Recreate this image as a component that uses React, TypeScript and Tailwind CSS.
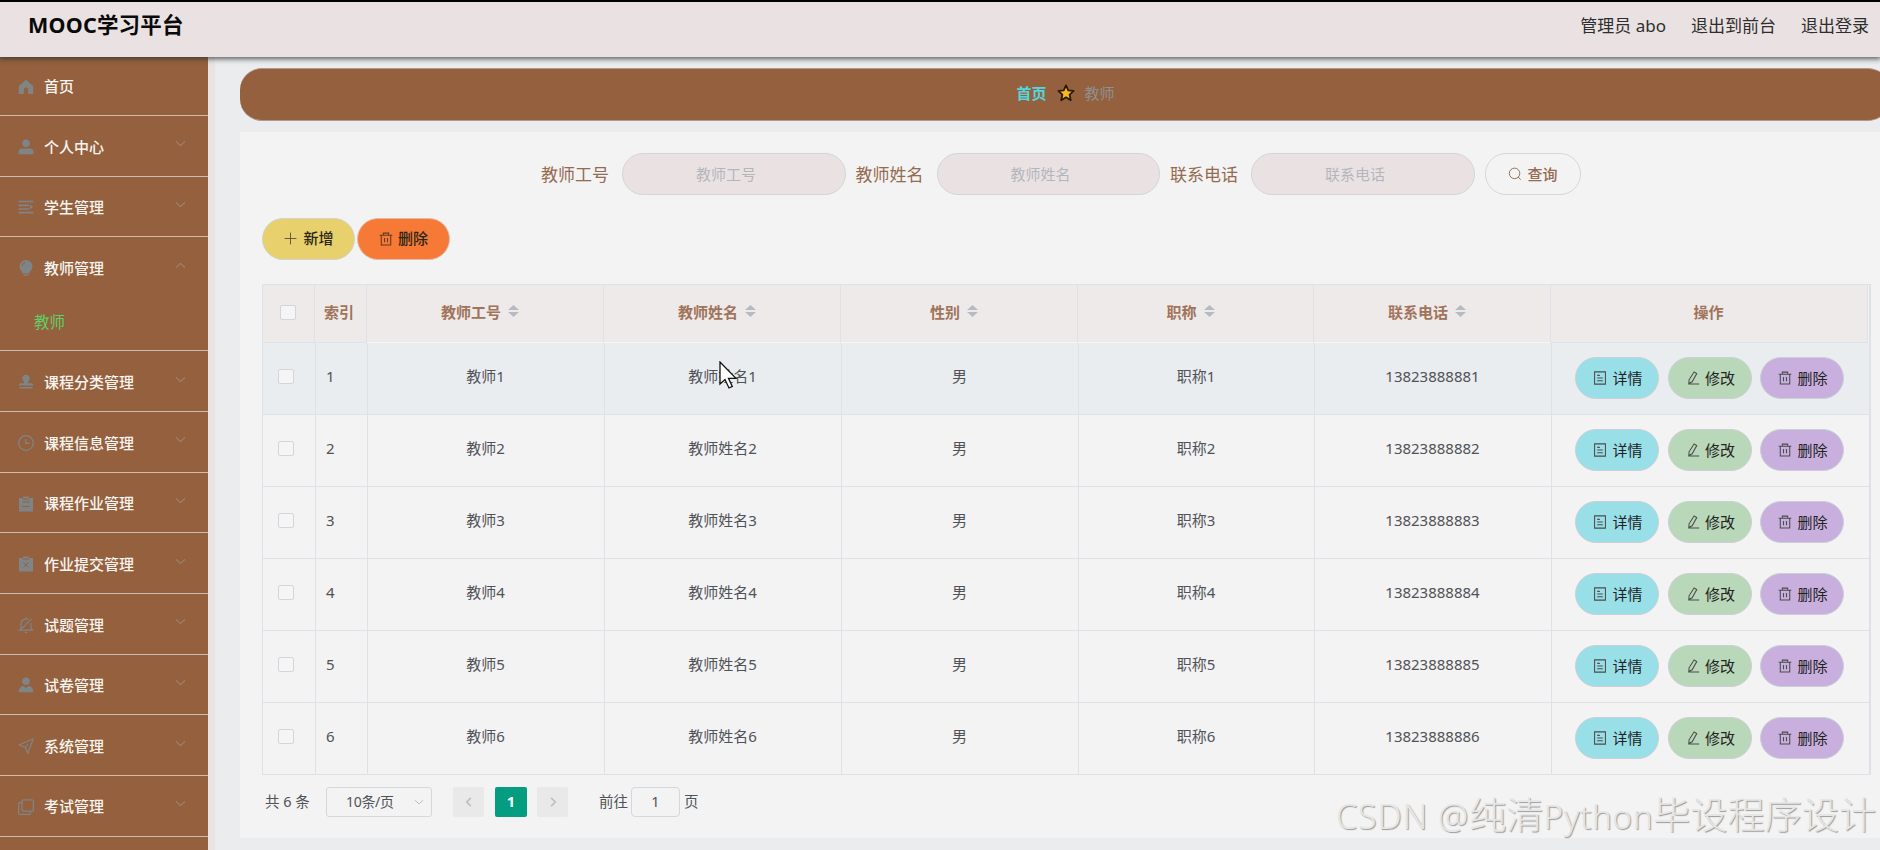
import React from "react";

const ICONS: Record<string, React.ReactNode> = {
  home: <path fill="currentColor" d="M8 .8 1.400 6.600q-.6.5-.6 1.300V15h5v-4.200a2.200 2.200 0 0 1 4.400 0V15h5V7.900q0-.8-.6-1.300z" />,
  user: (
    <g fill="currentColor">
      <circle cx="8" cy="4.300" r="3.800" />
      <path d="M.6 15.200v-1.900Q.6 9.600 4.300 9.600h7.400q3.700 0 3.700 3.700v1.900z" />
    </g>
  ),
  fold: (
    <g fill="none" stroke="currentColor" strokeWidth="1.700">
      <path d="M.5 2.500h15M.5 6.300h10.500M.5 10h10.500M.5 13.700h15" />
      <path fill="currentColor" stroke="none" d="M12 5.500v5l3-2.500z" />
    </g>
  ),
  bulb: (
    <g fill="currentColor">
      <path d="M8 0a6.500 6.500 0 0 0-6.500 6.500c0 3.300 2.500 4.300 3.300 7h6.400c.8-2.700 3.300-3.700 3.300-7A6.500 6.500 0 0 0 8 0z" />
      <path d="M5.500 14.400h5v1.300h-5z" />
      <path d="M4 6.500A4 4 0 0 1 7.500 2.500" fill="none" stroke="#94603e" strokeWidth=".9" />
    </g>
  ),
  stamp: (
    <g fill="currentColor">
      <path d="M8 .8a3.700 3.700 0 0 1 3.700 3.700c0 2-1.700 2.500-1.700 4v.7h3.500q1.900 0 1.900 2.300H.6q0-2.300 1.900-2.300H6v-.7c0-1.500-1.700-2-1.700-4A3.700 3.700 0 0 1 8 .8z" />
      <path d="M1.500 13h13v1.500h-13z" />
    </g>
  ),
  time: (
    <g fill="none" stroke="currentColor" strokeWidth="1.300">
      <circle cx="8" cy="8" r="7.300" />
      <path d="M7.700 3.800V8.300h4" />
    </g>
  ),
  order: (
    <g fill="currentColor">
      <path d="M1 2h4V.6h6V2h4v13.400H1z" />
      <path d="M4.300 6h7.400M4.300 10.500h7.400M4.500 3h7" fill="none" stroke="#94603e" strokeWidth="1" />
    </g>
  ),
  release: (
    <g fill="currentColor">
      <path d="M1 2h4V.6h6V2h4v13.400H1z" />
      <path d="m5.500 6.500 5 5m0-5-5 5M4.500 3h7" fill="none" stroke="#94603e" strokeWidth="1" />
    </g>
  ),
  mute: (
    <g fill="none" stroke="currentColor" strokeWidth="1.200">
      <path d="M.3 13.200h15.400M3 13V7a5 5 0 0 1 7.500-4.400M13 6v7M3 12.500 13.500 1.800M6.800 15.300h2.400M8 .3v1.500" />
    </g>
  ),
  custom: (
    <g fill="currentColor">
      <circle cx="8" cy="4.300" r="3.800" />
      <path d="M.5 15.200q.5-5.400 4.900-6.400L8 11l2.600-2.200q4.400 1 4.900 6.400z" />
    </g>
  ),
  position: (
    <path fill="none" stroke="currentColor" strokeWidth="1.200" strokeLinejoin="round" d="M15.300.8 1 7l6.300 2.300L9.800 15.300zM7.300 9.300l2.500-3" />
  ),
  copy: (
    <g fill="none" stroke="currentColor" strokeWidth="1.300">
      <rect x="4" y=".8" width="11.400" height="11.400" rx="1.500" />
      <path d="M3.500 3.500H2.200Q.6 3.500.6 5.200v8.600q0 1.600 1.600 1.600h8.600q1.700 0 1.700-1.600v-1" />
    </g>
  ),
  plus: <path fill="none" stroke="currentColor" strokeWidth="1" d="M8 1.700v12.600M1.700 8h12.600" />,
  trash: (
    <path fill="none" stroke="currentColor" strokeWidth="1.200" d="M.8 3.700h14.400M5 3.500V1.300h6v2.200M2.600 3.700v11.200h10.800V3.700M6.300 6.800v5M9.700 6.800v5" />
  ),
  doc: <path fill="none" stroke="currentColor" strokeWidth="1.200" d="M1.800 1h12.400v14H1.800zM4.800 5h3M4.800 8h6.400M4.800 11.200h6.400" />,
  edit: <path fill="none" stroke="currentColor" strokeWidth="1.200" d="M9.300 1.200 12.300 3 7 12.300l-3.800 2 .3-4.200zM3 14.800h12" />,
  search: (
    <g fill="none" stroke="currentColor" strokeWidth="1.100">
      <circle cx="7.500" cy="7.300" r="6" />
      <path d="m11.800 11.600 2.700 2.900" />
    </g>
  ),
  down: <path fill="none" stroke="currentColor" strokeWidth="1.300" d="m2.500 5.500 5.500 5 5.500-5" />,
  up: <path fill="none" stroke="currentColor" strokeWidth="1.300" d="m2.500 10.500 5.500-5 5.500 5" />,
  left: <path fill="none" stroke="currentColor" strokeWidth="2.200" d="M10.500 2.500 5 8l5.500 5.500" />,
  right: <path fill="none" stroke="currentColor" strokeWidth="2.200" d="M5.500 2.500 11 8l-5.500 5.500" />,
};

function Icon({ name, className }: { name: string; className: string }) {
  return (
    <svg viewBox="0 0 16 16" className={"shrink-0 " + className}>
      {ICONS[name]}
    </svg>
  );
}

const MENU: { icon: string; label: string; open?: boolean; leaf?: boolean }[] = [
  { icon: "home", label: "首页", leaf: true },
  { icon: "user", label: "个人中心" },
  { icon: "fold", label: "学生管理" },
  { icon: "bulb", label: "教师管理", open: true },
  { icon: "stamp", label: "课程分类管理" },
  { icon: "time", label: "课程信息管理" },
  { icon: "order", label: "课程作业管理" },
  { icon: "release", label: "作业提交管理" },
  { icon: "mute", label: "试题管理" },
  { icon: "custom", label: "试卷管理" },
  { icon: "position", label: "系统管理" },
  { icon: "copy", label: "考试管理" },
];

function Sidebar() {
  return (
    <aside className="w-[208px] shrink-0 bg-[#94603e]">
      {MENU.map((m) => (
        <div key={m.label} className="border-b border-[#d2bcb0]">
          <div className={(m.leaf ? "h-[58px] pt-px " : "h-[59.650px] pt-0.5 ") + "flex items-center pl-[18px] pr-[21px]"}>
            <Icon name={m.icon} className="size-4 text-[#7f8487]" />
            <span className="ml-2.5 text-[15px] font-medium text-[#f8f5f0]">{m.label}</span>
            {!m.leaf && <Icon name={m.open ? "up" : "down"} className="mb-1.5 ml-auto size-[13px] text-[#a18573]" />}
          </div>
          {m.open && <div className="flex h-[53.500px] items-center pb-0.5 pl-[34px] text-[15.500px] text-[#5fd068]">教师</div>}
        </div>
      ))}
    </aside>
  );
}

function Field({ label }: { label: string }) {
  return (
    <div className="flex w-[314.500px] items-center">
      <span className="w-[81px] pt-px text-[17px] text-[#946a50]">{label}</span>
      <div className="flex h-[42px] w-[223.500px] items-center rounded-[21px] border border-[#d3d5db] bg-[#eae2e2]">
        <span className="w-[206px] text-center text-[15px] text-[#b4b6be]">{label}</span>
      </div>
    </div>
  );
}

function Sort() {
  return (
    <svg viewBox="0 0 11 12" className="mb-0.5 ml-[7px] h-3 w-[11px] fill-[#b6bac3]">
      <path d="M0 5 5.500 0 11 5zM0 7h11l-5.500 5z" />
    </svg>
  );
}

function Check() {
  return <span className="block h-[15px] w-4 rounded-[2px] border border-[#d3d5da] bg-[#f5f5f5]" />;
}

function ActionButton({ icon, label, tone }: { icon: string; label: string; tone: string }) {
  return (
    <button className={"flex h-[42px] w-[84px] items-center justify-center gap-[5px] rounded-[21px] border border-[#ccd0d6] pl-0.5 text-[15px] text-[#222] " + tone}>
      <Icon name={icon} className="size-3.5 text-[#4c4c4c]" />
      {label}
    </button>
  );
}

const HEADS = ["教师工号", "教师姓名", "性别", "职称", "联系电话"];

function TeacherTable() {
  return (
    <div className="w-[1609px] border-y border-l border-r-2 border-[#dfe1e9] text-[15px]">
      <div className="grid h-[58px] w-[1605px] grid-cols-[52px_52px_237px_237px_237px_236px_237px_317px] bg-[#eeeae9] font-bold text-[#a0745a]">
        <div className="flex items-center border-b border-r border-[#dfe1e9] pb-[3px] pl-[17px]">
          <Check />
        </div>
        <div className="flex items-center border-b border-r border-[#dfe1e9] pb-[3px] pl-[9px]">索引</div>
        {HEADS.map((h) => (
          <div key={h} className="flex items-center justify-center border-b border-r border-b-[#f6f6f6] border-r-[#dfe1e9] pb-[3px] pr-2.5">
            {h}
            <Sort />
          </div>
        ))}
        <div className="flex items-center justify-center border-b border-r border-[#dfe1e9] pb-[3px] pr-px">操作</div>
      </div>
      {[1, 2, 3, 4, 5, 6].map((n) => (
        <div
          key={n}
          className={
            (n === 1 ? "bg-[#eaedef] " : "bg-[#f3f3f3] ") +
            (n === 6 ? "h-[71px] " : "h-[72px] border-b ") +
            "grid grid-cols-[53px_52px_237px_237px_237px_236px_237px_1fr] divide-x divide-[#dfe1e9] border-[#dfe1e9] text-[#505257]"
          }
        >
          <div className="flex items-center pb-1 pl-[15px]">
            <Check />
          </div>
          <div className="flex items-center pb-1 pl-2.5">{n}</div>
          <div className="flex items-center justify-center pb-1 pr-px">教师{n}</div>
          <div className="flex items-center justify-center pb-1 pr-px">教师姓名{n}</div>
          <div className="flex items-center justify-center pb-1 pr-px">男</div>
          <div className="flex items-center justify-center pb-1 pr-px">职称{n}</div>
          <div className="flex items-center justify-center pb-1 pr-px">1382388888{n}</div>
          <div className="flex items-center gap-[8.500px] pb-px pl-[23px]">
            <ActionButton icon="doc" label="详情" tone="bg-[#98dfe8]" />
            <ActionButton icon="edit" label="修改" tone="bg-[#b9d8b9]" />
            <ActionButton icon="trash" label="删除" tone="bg-[#c8afdd]" />
          </div>
        </div>
      ))}
    </div>
  );
}

function Pagination() {
  return (
    <div className="mt-[11px] flex h-[31px] items-center pl-[3px] text-[14.500px] text-[#505257]">
      <span className="w-[61px] whitespace-nowrap">共 6 条</span>
      <div className="flex h-[30px] w-[106px] items-center rounded-[3px] border border-[#d5d7dc] pl-[19px] pr-1.5 text-[14px]">
        <span className="tracking-[-0.300px]">10条/页</span>
        <Icon name="down" className="ml-auto size-3 text-[#b9bcc4]" />
      </div>
      <div className="ml-[21px] flex h-[30px] w-[31px] items-center justify-center rounded-[2px] bg-[#e9e9ea]">
        <Icon name="left" className="size-3 text-[#bcbec6]" />
      </div>
      <div className="ml-[11px] flex h-[30px] w-8 items-center justify-center rounded-[2px] bg-[#049d82] font-bold text-white">1</div>
      <div className="ml-2.5 flex h-[30px] w-[31px] items-center justify-center rounded-[2px] bg-[#e9e9ea]">
        <Icon name="right" className="size-3 text-[#bcbec6]" />
      </div>
      <span className="ml-[31px]">前往</span>
      <div className="mx-[3px] flex h-[30px] w-[49px] items-center justify-center rounded-[4px] border border-[#d5d7dc]">1</div>
      <span className="ml-px">页</span>
    </div>
  );
}

export default function App() {
  return (
    <div className="relative flex h-[850px] w-[1880px] flex-col overflow-hidden bg-[#ebecee] font-['Noto_Sans','Noto_Sans_CJK_SC',sans-serif]">
      <header className="relative z-10 flex h-[57px] shrink-0 items-center justify-between border-t-2 border-black bg-[#eae2e2] pb-2 pl-7 pr-[11px] shadow-[0_1px_5px_1px_rgba(40,50,50,0.75)]">
        <h1 className="text-[21.500px] font-bold tracking-[0.200px] text-[#0a0a0a]">MOOC学习平台</h1>
        <nav className="flex gap-[25px] text-[17px] text-[#2e2e2e]">
          <span>管理员 abo</span>
          <span>退出到前台</span>
          <span>退出登录</span>
        </nav>
      </header>
      <div className="flex min-h-0 flex-1">
        <Sidebar />
        <div className="w-[7px] shrink-0 bg-[#e9e4e4]" />
        <main className="flex min-w-0 flex-1 flex-col pl-[25px]">
          <div className="mt-[11px] flex h-[52.500px] w-[1650px] shrink-0 items-center justify-center rounded-[22px] border-y border-[#b09a8b] bg-[#94603e] pb-0.5 pl-1 text-[15px]">
            <div className="flex w-[101px] items-center">
              <span className="font-bold text-[#55d5dc]">首页</span>
              <svg viewBox="0 0 20 20" className="mx-2.5 size-[18px] shrink-0 fill-[#fbb81c] stroke-[#2a1a08] stroke-2">
                <path strokeLinejoin="round" d="m10 1.500 2.500 5.600 6 .6-4.500 4.100 1.300 6.200-5.300-3.200L4.700 18 6 11.800 1.500 7.700l6-.6z" />
              </svg>
              <span className="text-[#8f9094]">教师</span>
            </div>
          </div>
          <section className="mt-[11px] h-[706.500px] shrink-0 bg-[#f3f3f3] pl-[22px] pt-[21.500px]">
            <div className="flex items-center pl-[279px]">
              <Field label="教师工号" />
              <Field label="教师姓名" />
              <Field label="联系电话" />
              <button className="flex h-[42px] w-24 items-center justify-center gap-[5px] rounded-[21px] border border-[#d5d7e0] pl-px text-[15px] font-medium text-[#946a50]">
                <Icon name="search" className="size-3.5" />
                查询
              </button>
            </div>
            <div className="mt-[23px] flex gap-[2px] text-[15px] text-[#2b2516]">
              <button className="flex h-[42px] w-[93px] items-center justify-center gap-[5px] rounded-[21px] border border-[#d3d2cc] bg-[#e8d06c] pb-px font-medium">
                <Icon name="plus" className="size-[15px] text-[#5d5638]" />
                新增
              </button>
              <button className="flex h-[42px] w-[93px] items-center justify-center gap-[5px] rounded-[21px] border border-[#e2bca8] bg-[#f67936] pb-px font-medium">
                <Icon name="trash" className="size-3.5 text-[#5f3a22]" />
                删除
              </button>
            </div>
            <div className="mt-6">
              <TeacherTable />
            </div>
            <Pagination />
          </section>
        </main>
      </div>
      <div className="absolute left-[1336px] top-[789px] whitespace-nowrap text-[37.200px] leading-[52px] text-[#e6e6e6] [font-weight:300] [text-shadow:1px_1px_1px_#9a9a9a]">
        <span className="text-[34px] tracking-[0.900px]">CSDN @</span>
        纯清
        <span className="text-[33.500px] tracking-[0.500px]">Python</span>
        毕设程序设计
      </div>
      <svg viewBox="0 0 18 28" className="absolute left-[719px] top-[361px] h-7 w-[18px]">
        <path d="M1 1v22l5-4.500 4 8.500 3.300-1.600-3.800-8H17z" fill="#fff" stroke="#111" strokeWidth="1.300" />
      </svg>
    </div>
  );
}
